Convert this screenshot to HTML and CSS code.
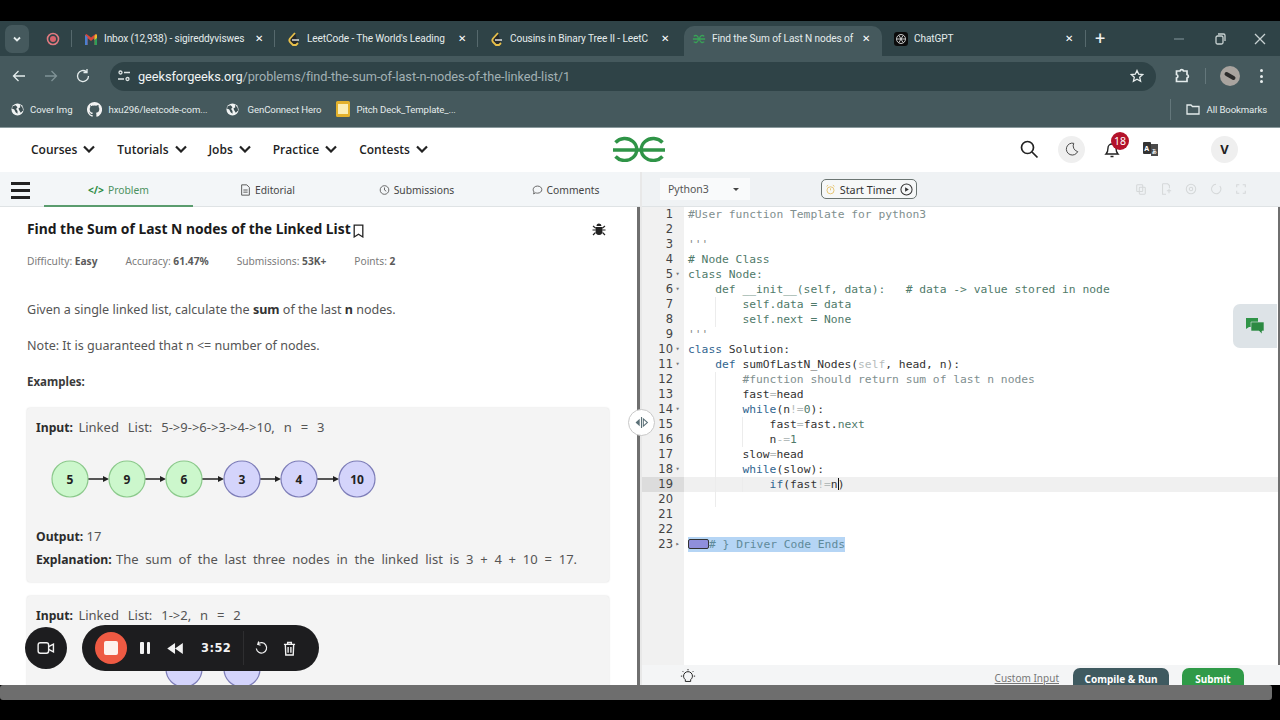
FILE: index.html
```html
<!DOCTYPE html>
<html lang="en">
<head>
<meta charset="utf-8">
<title>Find the Sum of Last N nodes of the Linked List</title>
<link rel="stylesheet" href="styles.css">
</head>
<body>
<div class="shell">
  <div class="blackbar"></div>
  <div class="tabstrip">
    <div class="chip"><svg class="i12" viewBox="0 0 12 12"><path d="M3 4.500 6 7.500 9 4.500"/></svg></div>
    <div class="pinned"><svg class="i16" viewBox="0 0 16 16"><circle class="rec-o" cx="8" cy="8" r="5.500"/><circle class="rec-i" cx="8" cy="8" r="3"/></svg></div>
    <div class="tabsep"></div>
    <div class="tab">
      <svg class="fav" viewBox="0 0 14 14"><path class="g-r" d="M1 3v10h2.500V6L7 9l3.500-3V13H13V3l-1.500-1L7 5.500 2.500 2z"/><path class="g-b" d="M1 3v10h2.500V5z"/><path class="g-g" d="M13 3v10h-2.500V5z"/><path class="g-y" d="M10.500 4 12 2l1 1v3l-2.500 2z"/></svg>
      <span class="ttl">Inbox (12,938) - sigireddyviswes</span><span class="x">✕</span>
    </div>
    <div class="tabsep"></div>
    <div class="tab">
      <svg class="fav" viewBox="0 0 14 14"><path class="lc1" d="M8 1 3 6.500c-1 1.500-1 2.500 0 3.500l3 3h3l2-2"/><path class="lc2" d="M5 8h7"/></svg>
      <span class="ttl">LeetCode - The World's Leading</span><span class="x">✕</span>
    </div>
    <div class="tabsep"></div>
    <div class="tab">
      <svg class="fav" viewBox="0 0 14 14"><path class="lc1" d="M8 1 3 6.500c-1 1.500-1 2.500 0 3.500l3 3h3l2-2"/><path class="lc2" d="M5 8h7"/></svg>
      <span class="ttl">Cousins in Binary Tree II - LeetC</span><span class="x">✕</span>
    </div>
    <div class="tab active">
      <svg class="fav" viewBox="0 0 16 14"><path class="gfgfav" d="M1 7h14M2 4c2-2 5-1 5.500 3C7 11 4 12 2 10M14 4c-2-2-5-1-5.500 3C9 11 12 12 14 10"/></svg>
      <span class="ttl">Find the Sum of Last N nodes of</span><span class="x">✕</span>
    </div>
    <div class="tab">
      <svg class="fav" viewBox="0 0 14 14"><rect class="gpt-bg" width="14" height="14" rx="3"/><circle class="gpt" cx="7" cy="7" r="4.500"/><path class="gpt" d="M5 3.500 9 10.500M9 3.500 5 10.500M3 7h8"/></svg>
      <span class="ttl">ChatGPT</span><span class="x">✕</span>
    </div>
    <div class="tabsep last"></div>
    <div class="newtab">+</div>
    <div class="winctl">
      <svg class="i14 dim" viewBox="0 0 14 14"><path d="M2 7h10"/></svg>
      <svg class="i14" viewBox="0 0 14 14"><rect x="3" y="4" width="7" height="8" rx="1.500"/><path d="M5 2h5.500A1.500 1.500 0 0 1 12 3.500V9"/></svg>
      <svg class="i14" viewBox="0 0 14 14"><path d="M2 2l10 10M12 2 2 12"/></svg>
    </div>
  </div>
  <div class="toolbar">
    <svg class="i16 nav" viewBox="0 0 16 16"><path d="M14 8H2.500M7.500 3l-5 5 5 5"/></svg>
    <svg class="i16 nav dimmer" viewBox="0 0 16 16"><path d="M2 8h11.500M8.500 3l5 5-5 5"/></svg>
    <svg class="i16 nav" viewBox="0 0 16 16"><path d="M13.500 8A5.500 5.500 0 1 1 11.500 3.800M12 1v3.500H8.500"/></svg>
    <div class="omni">
      <svg class="i14 tune" viewBox="0 0 14 14"><circle cx="3.500" cy="3.500" r="1.500"/><path d="M7 3.500h6M1 10h6"/><circle cx="10.500" cy="10" r="1.500"/></svg>
      <span class="url"><b>geeksforgeeks.org</b>/problems/find-the-sum-of-last-n-nodes-of-the-linked-list/1</span>
      <svg class="i14 star" viewBox="0 0 14 14"><path d="M7 1.500 8.700 5.200l4 .4-3 2.700.9 4L7 10.300l-3.600 2 .9-4-3-2.700 4-.4z"/></svg>
    </div>
    <svg class="i16 ext" viewBox="0 0 16 16"><path d="M2.500 3H6a1.800 1.800 0 0 1 3.500 0h3.500v3.500a1.800 1.800 0 0 1 0 3.500v3.500H2.500V10a1.800 1.800 0 0 0 0-3.500z"/></svg>
    <div class="vsep"></div>
    <div class="avatar"><span class="avatar-mark"></span></div>
    <div class="kebab"><i></i><i></i><i></i></div>
  </div>
  <div class="bookmarks">
    <div class="bm"><svg class="globe" viewBox="0 0 14 14"><circle class="gl-a" cx="7" cy="7" r="6.500"/><path class="gl-b" d="M2 3.500 5 2.500l2 2-1.500 2L7 8.500v3L5 10 3.500 7 1 6zM9.500 1.500 12.500 5l.5 3-2.500 2.500L9 8l-1-2 2-1.500z"/></svg>Cover Img</div>
    <div class="bm"><svg class="ghub" viewBox="0 0 16 16"><path d="M8 0a8 8 0 0 0-2.500 15.600c.4.100.5-.2.500-.4v-1.400c-2.200.5-2.700-1-2.700-1-.4-.9-.9-1.200-.9-1.200-.7-.5.100-.5.100-.5.800.100 1.200.8 1.200.8.700 1.200 1.900.9 2.300.7.100-.5.300-.9.500-1.100-1.800-.2-3.600-.9-3.600-4 0-.9.300-1.600.8-2.100-.1-.2-.4-1 .1-2.100 0 0 .7-.2 2.200.8a7.600 7.600 0 0 1 4 0c1.500-1 2.200-.8 2.200-.8.400 1.100.2 1.900.1 2.100.5.500.8 1.200.8 2.100 0 3.100-1.900 3.800-3.700 4 .3.300.6.800.6 1.500v2.200c0 .2.100.5.600.4A8 8 0 0 0 8 0z"/></svg>hxu296/leetcode-com...</div>
    <div class="bm wide"><svg class="globe" viewBox="0 0 14 14"><circle class="gl-a" cx="7" cy="7" r="6.500"/><path class="gl-b" d="M2 3.500 5 2.500l2 2-1.500 2L7 8.500v3L5 10 3.500 7 1 6zM9.500 1.500 12.500 5l.5 3-2.500 2.500L9 8l-1-2 2-1.500z"/></svg>GenConnect Hero</div>
    <div class="bm"><span class="slides"></span>Pitch Deck_Template_...</div>
    <div class="bm-right"><div class="vsep short"></div><svg class="i14" viewBox="0 0 14 14"><path d="M1 3h4l1.500 1.500H13V12H1z"/></svg>All Bookmarks</div>
  </div>

  <div class="page">
    <header class="sitehead">
      <nav class="sitenav">
        <a>Courses<svg class="chev" viewBox="0 0 12 8"><path d="M1 1.500 6 6.500 11 1.500"/></svg></a>
        <a>Tutorials<svg class="chev" viewBox="0 0 12 8"><path d="M1 1.500 6 6.500 11 1.500"/></svg></a>
        <a>Jobs<svg class="chev" viewBox="0 0 12 8"><path d="M1 1.500 6 6.500 11 1.500"/></svg></a>
        <a>Practice<svg class="chev" viewBox="0 0 12 8"><path d="M1 1.500 6 6.500 11 1.500"/></svg></a>
        <a>Contests<svg class="chev" viewBox="0 0 12 8"><path d="M1 1.500 6 6.500 11 1.500"/></svg></a>
      </nav>
      <svg class="logo" viewBox="0 0 54 26"><path d="M1 14h52M3.500 6.500A12 11 0 1 1 3.500 20.500M50.500 6.500A12 11 0 1 0 50.500 20.500"/></svg>
      <div class="headicons">
        <svg class="search" viewBox="0 0 20 20"><circle cx="8.500" cy="8.500" r="6"/><path d="M13 13l5.500 5.500"/></svg>
        <div class="round"><svg class="moon" viewBox="0 0 16 16"><path d="M10 1.500A6.800 6.800 0 1 0 14.500 11 6.800 6.800 0 0 1 10 1.500z"/></svg></div>
        <div class="bell">
          <svg class="bellsvg" viewBox="0 0 16 18"><path d="M2 14c1.500-1.500 2-3 2-6a4 4 0 0 1 8 0c0 3 .5 4.500 2 6zM6.500 16.500h3"/></svg>
          <span class="badge">18</span>
        </div>
        <div class="translate"><span class="tr-a">A</span><span class="tr-b">あ</span></div>
        <div class="round user">V</div>
      </div>
    </header>

    <div class="split">
      <section class="left">
        <div class="ltabs">
          <div class="burger"><i></i><i></i><i></i></div>
          <div class="ltab on"><span class="code-ic">&lt;/&gt;</span> Problem</div>
          <div class="ltab"><svg class="li" viewBox="0 0 12 14"><path d="M1.500 1h6l3 3v9h-9zM3.500 7h5M3.500 9.500h5"/></svg> Editorial</div>
          <div class="ltab"><svg class="li" viewBox="0 0 14 14"><circle cx="7" cy="7" r="5.500"/><path d="M7 3.800V7l2.200 1.500"/></svg> Submissions</div>
          <div class="ltab"><svg class="li" viewBox="0 0 14 14"><path d="M7 2c3.300 0 5.500 2 5.500 4.500S10.300 11 7 11c-1 0-1.800-.2-2.500-.4L2 12l.6-2.500C1.800 8.700 1.500 7.600 1.500 6.500 1.500 4 3.700 2 7 2z"/></svg> Comments</div>
        </div>
        <div class="lbody">
          <div class="titlerow">
            <h1>Find the Sum of Last N nodes of the Linked List</h1>
            <svg class="bookmark" viewBox="0 0 10 13"><path d="M1 1h8v11L5 9.500 1 12z"/></svg>
            <svg class="bug" viewBox="0 0 14 14"><path d="M4.500 4a2.500 2.500 0 0 1 5 0zM3.500 5h7v3.500a3.500 4.500 0 0 1-7 0z"/><path class="bugleg" d="M1 4l2.500 2M13 4l-2.500 2M.5 8h3M13.500 8h-3M1 13l2.500-2.500M13 13l-2.500-2.500"/></svg>
          </div>
          <div class="meta">
            <span>Difficulty: <b>Easy</b></span><span>Accuracy: <b>61.47%</b></span><span>Submissions: <b>53K+</b></span><span>Points: <b>2</b></span>
          </div>
          <p class="para">Given a single linked list, calculate the <b>sum</b> of the last <b>n</b> nodes.</p>
          <p class="para second">Note: It is guaranteed that n &lt;= number of nodes.</p>
          <p class="examples">Examples:</p>
          <div class="example">
            <p class="ex-l"><b>Input:</b> <span class="wsl">Linked List: 5-&gt;9-&gt;6-&gt;3-&gt;4-&gt;10, n = 3</span></p>
            <svg class="ll" viewBox="0 0 340 44">
              <path class="arrow" d="M38 22h16M95 22h16M152 22h17M210 22h16M267 22h17"/>
              <path class="head" d="M59 22l-6-3v6zM116 22l-6-3v6zM174 22l-6-3v6zM231 22l-6-3v6zM289 22l-6-3v6z"/>
              <circle class="gn" cx="20" cy="22" r="18"/><circle class="gn" cx="77" cy="22" r="18"/><circle class="gn" cx="134" cy="22" r="18"/>
              <circle class="pn" cx="192" cy="22" r="18"/><circle class="pn" cx="249" cy="22" r="18"/><circle class="pn" cx="307" cy="22" r="18"/>
              <text x="20" y="26.500">5</text><text x="77" y="26.500">9</text><text x="134" y="26.500">6</text><text x="192" y="26.500">3</text><text x="249" y="26.500">4</text><text x="307" y="26.500">10</text>
            </svg>
            <p class="ex-o"><b>Output:</b> 17</p>
            <p class="ex-e"><b>Explanation:</b> <span class="wse">The sum of the last three nodes in the linked list is 3 + 4 + 10 = 17.</span></p>
          </div>
          <div class="example">
            <p class="ex-l"><b>Input:</b> <span class="wsl">Linked List: 1-&gt;2, n = 2</span></p>
            <svg class="ll ll2" viewBox="0 0 340 44">
              <circle class="pn" cx="134" cy="22" r="18"/><circle class="pn" cx="192" cy="22" r="18"/>
            </svg>
          </div>
        </div>
      </section>

      <section class="right">
        <div class="etools">
          <div class="lang">Python3<span class="caret"></span></div>
          <div class="timer">
            <svg class="alarm" viewBox="0 0 14 14"><circle cx="7" cy="8" r="4.500"/><path d="M2 3l2-1.500M12 3l-2-1.500M7 5.500V8"/></svg>
            <span class="timer-label">Start Timer</span>
            <svg class="playc" viewBox="0 0 14 14"><circle cx="7" cy="7" r="6"/><path class="playt" d="M5.500 4.500v5l4-2.500z"/></svg>
          </div>
          <div class="etool-ic">
            <svg viewBox="0 0 14 14"><rect x="2" y="2" width="7" height="8" rx="1"/><rect x="5" y="5" width="7" height="8" rx="1"/></svg>
            <svg viewBox="0 0 14 14"><path d="M3 1h6l2 2v3M3 1v12h4M8 9h5M10.500 7v5"/></svg>
            <svg viewBox="0 0 14 14"><circle cx="7" cy="7" r="5.500"/><circle cx="7" cy="7" r="2"/></svg>
            <svg viewBox="0 0 14 14"><path d="M11.500 3.500A5.500 5.500 0 1 1 7 1.500"/></svg>
            <svg viewBox="0 0 14 14"><path d="M2 5V2h3M9 2h3v3M12 9v3H9M5 12H2V9"/></svg>
          </div>
        </div>
        <div class="editor">
          <div class="ln"><span class="num">1</span><span class="fold"></span><span class="txt com">#User function Template for python3</span></div>
          <div class="ln"><span class="num">2</span><span class="fold"></span><span class="txt"></span></div>
          <div class="ln"><span class="num">3</span><span class="fold"></span><span class="txt str">'''</span></div>
          <div class="ln"><span class="num">4</span><span class="fold"></span><span class="txt gre"># Node Class</span></div>
          <div class="ln"><span class="num">5</span><span class="fold">▾</span><span class="txt gre">class Node:</span></div>
          <div class="ln"><span class="num">6</span><span class="fold">▾</span><span class="txt gre"><i class="ind"></i>def __init__(self, data):   # data -&gt; value stored in node</span></div>
          <div class="ln"><span class="num">7</span><span class="fold"></span><span class="txt gre"><i class="ind"></i><i class="ind g"></i>self.data = data</span></div>
          <div class="ln"><span class="num">8</span><span class="fold"></span><span class="txt gre"><i class="ind"></i><i class="ind g"></i>self.next = None</span></div>
          <div class="ln"><span class="num">9</span><span class="fold"></span><span class="txt str">'''</span></div>
          <div class="ln"><span class="num">10</span><span class="fold">▾</span><span class="txt"><span class="kw">class</span> Solution:</span></div>
          <div class="ln"><span class="num">11</span><span class="fold">▾</span><span class="txt"><i class="ind"></i><span class="kw">def</span> sumOfLastN_Nodes(<span class="lt">self</span>, head, n):</span></div>
          <div class="ln"><span class="num">12</span><span class="fold"></span><span class="txt"><i class="ind"></i><i class="ind g"></i><span class="com">#function should return sum of last n nodes</span></span></div>
          <div class="ln"><span class="num">13</span><span class="fold"></span><span class="txt"><i class="ind"></i><i class="ind g"></i>fast<span class="lt">=</span>head</span></div>
          <div class="ln"><span class="num">14</span><span class="fold">▾</span><span class="txt"><i class="ind"></i><i class="ind g"></i><span class="kw">while</span>(n<span class="lt">!=</span><span class="gre">0</span>):</span></div>
          <div class="ln"><span class="num">15</span><span class="fold"></span><span class="txt"><i class="ind"></i><i class="ind g"></i><i class="ind g"></i>fast<span class="lt">=</span>fast.<span class="gre">next</span></span></div>
          <div class="ln"><span class="num">16</span><span class="fold"></span><span class="txt"><i class="ind"></i><i class="ind g"></i><i class="ind g"></i>n<span class="lt">-=</span><span class="gre">1</span></span></div>
          <div class="ln"><span class="num">17</span><span class="fold"></span><span class="txt"><i class="ind"></i><i class="ind g"></i>slow<span class="lt">=</span>head</span></div>
          <div class="ln"><span class="num">18</span><span class="fold">▾</span><span class="txt"><i class="ind"></i><i class="ind g"></i><span class="kw">while</span>(slow):</span></div>
          <div class="ln cur"><span class="num">19</span><span class="fold"></span><span class="txt"><i class="ind"></i><i class="ind g"></i><i class="ind g"></i><span class="kw">if</span>(fast<span class="lt">!=</span>n<span class="caretbar"></span>)</span></div>
          <div class="ln"><span class="num">20</span><span class="fold"></span><span class="txt"><i class="ind"></i><i class="ind g"></i></span></div>
          <div class="ln"><span class="num">21</span><span class="fold"></span><span class="txt"></span></div>
          <div class="ln"><span class="num">22</span><span class="fold"></span><span class="txt"></span></div>
          <div class="ln"><span class="num">23</span><span class="fold">▸</span><span class="txt com sel"><span class="foldmark"></span># } Driver Code Ends</span></div>
          <div class="gutterfill"></div>
        </div>
        <div class="efoot">
          <svg class="bulb" viewBox="0 0 18 18"><path d="M6 12c-1-1-2-2-2-4a5 5 0 0 1 10 0c0 2-1 3-2 4v2H6zM9 0v1.500M1 8h1.500M15.500 8H17M3 2.500 4 3.500M15 2.500 14 3.500"/></svg>
          <span class="custom">Custom Input</span>
          <span class="btn dark">Compile &amp; Run</span>
          <span class="btn green">Submit</span>
        </div>
      </section>
    </div>

    <div class="handle"><svg viewBox="0 0 16 12"><path class="ha" d="M6 2 1.500 6 6 10z"/><path class="hb" d="M8 0v12"/><path class="hc" d="M10 2l4.500 4-4.500 4z"/></svg></div>
    <div class="chatbtn"><svg viewBox="0 0 18 16"><path class="c1" d="M0 0h12v9H3l-3 2z"/><path class="c2" d="M5 4h13v9h-2v3l-3-3H5z"/></svg></div>
    <div class="cam"><svg viewBox="0 0 20 16"><rect x="1" y="2" width="12" height="12" rx="2.500"/><path d="M13 6.500 18.500 3.500v9L13 9.500"/></svg></div>
    <div class="rec">
      <div class="stop"><i></i></div>
      <div class="pause"><i></i><i></i></div>
      <svg class="rew" viewBox="0 0 18 12"><path d="M8.500 0v12L0 6zM17 0v12L8.500 6z"/></svg>
      <span class="time">3:52</span>
      <div class="recsep"></div>
      <svg class="undo" viewBox="0 0 16 16"><path d="M4 3.500A5.500 5.500 0 1 1 2.500 8M5 .5 4 3.500l3 1"/></svg>
      <svg class="trash" viewBox="0 0 14 16"><path d="M1 3.500h12M5 3V1.500h4V3M2.500 3.500 3 15h8l.5-11.500M5.500 6.500v6M8.500 6.500v6"/></svg>
    </div>
  </div>
  <div class="graybar"></div>
</div>
</body>
</html>
```
FILE: styles.css
```css
* { box-sizing: border-box; }
html, body { margin: 0; height: 100%; background: #000; overflow: hidden; }
body { font-family: "Noto Sans", "Open Sans", sans-serif; }
p, h1 { margin: 0; }
svg { display: block; flex: none; }
.shell { width: 1280px; height: 720px; display: flex; flex-direction: column; background: #000; }
.blackbar { height: 21px; flex: none; }

/* Tab strip */
.tabstrip { height: 35px; flex: none; background: #2f4347; display: flex; align-items: center; padding-left: 5px; color: #e4ecec; font-family: Roboto, "Noto Sans", sans-serif; font-size: 10.100px; }
.i12, .i14, .i16 { fill: none; stroke: currentColor; stroke-width: 1.3; }
.i12 { width: 12px; height: 12px; stroke-width: 1.8; }
.i14 { width: 14px; height: 14px; }
.i16 { width: 16px; height: 16px; }
.chip { width: 24px; height: 28px; background: #45595d; border-radius: 7px; display: flex; align-items: center; justify-content: center; }
.pinned { width: 37px; margin-left: 5px; display: flex; justify-content: center; }
.rec-o { stroke: #e07a80; stroke-width: 1.6; fill: none; }
.rec-i { fill: #d9626c; stroke: none; }
.tabsep { width: 1px; height: 17px; background: #56696d; flex: none; }
.tabsep.last { margin-left: 1px; }
.tab { width: 202px; height: 35px; padding: 0 9px 0 12px; display: flex; align-items: center; gap: 6px; flex: none; }
.tab.active { background: #45595d; border-radius: 10px 10px 0 0; width: 198px; margin-top: 5px; height: 30px; margin-left: 4px; padding: 0 10px 5px 8px; }
.fav { width: 14px; height: 14px; fill: none; }
.ttl { flex: 1; white-space: nowrap; overflow: hidden; letter-spacing: -0.1px; }
.x { width: 12px; text-align: center; font-size: 10px; color: #fff; flex: none; }
.g-r { fill: #d8463a; } .g-b { fill: #4a7fd0; } .g-g { fill: #2f9e58; } .g-y { fill: #eab92e; }
.lc1 { stroke: #e8c04a; stroke-width: 1.8; fill: #26282a; }
.lc2 { stroke: #e8e8e8; stroke-width: 1.4; }
.gfgfav { stroke: #39a257; stroke-width: 1.5; }
.gpt-bg { fill: #0b0b0b; }
.gpt { stroke: #ddd; stroke-width: 0.9; fill: none; }
.newtab { margin-left: 7px; font-size: 18px; font-weight: 400; width: 14px; text-align: center; color: #f0f0f0; }
.winctl { margin-left: auto; width: 170px; padding-right: 13px; padding-left: 62px; display: flex; justify-content: space-between; color: #c8d2d2; }
.dim { color: #73868a; }

/* Toolbar */
.toolbar { height: 38px; flex: none; background: #45595d; display: flex; align-items: center; padding: 2px 0 0 11px; color: #e4ecec; }
.nav { margin-right: 16px; }
.dimmer { color: #7f9296; }
.omni { width: 1046px; height: 29px; margin-left: 3px; background: #2f4347; border-radius: 15px; display: flex; align-items: center; padding: 0 12px 0 7px; gap: 7px; }
.tune { color: #dfe6e6; }
.url { flex: 1; font-family: Roboto, "Noto Sans", sans-serif; font-size: 12.750px; color: #a2b1b4; letter-spacing: -0.05px; white-space: nowrap; }
.url b { font-weight: 400; color: #f0f4f4; }
.star { color: #e8eeee; }
.ext { margin-left: 18px; stroke-width: 1.7; }
.vsep { width: 1px; height: 16px; background: #64777b; flex: none; margin-left: 15px; }
.avatar { width: 20px; height: 20px; border-radius: 50%; background: #a9a49f; margin-left: 14px; display: flex; align-items: center; justify-content: center; }
.avatar-mark { width: 12px; height: 4px; background: #2c2c2c; border-radius: 3px; transform: rotate(30deg); }
.kebab { margin-left: 20px; display: flex; flex-direction: column; gap: 2.500px; }
.kebab i { width: 3px; height: 3px; border-radius: 50%; background: #e8eeee; display: block; }

/* Bookmarks */
.bookmarks { height: 34px; flex: none; background: #45595d; border-bottom: 1px solid #8a9a9d; display: flex; align-items: center; padding: 0 0 3px 11px; gap: 15px; color: #e4ecec; font-family: Roboto, "Noto Sans", sans-serif; font-size: 9.600px; letter-spacing: -0.1px; }
.bm { display: flex; align-items: center; gap: 6px; white-space: nowrap; }
.bm.wide { gap: 9px; margin-left: 3px; }
.globe { width: 13px; height: 13px; }
.gl-a { fill: #f0f3f3; }
.gl-b { fill: #3d4f53; }
.ghub { width: 15px; height: 15px; fill: #f2f2f2; }
.slides { width: 14px; height: 16px; border-radius: 1.500px; border: 3px solid #e3b12c; border-left-width: 2px; border-right-width: 2px; background-color: #fbeeb6; display: block; }
.bm-right { margin-left: auto; display: flex; align-items: center; gap: 7px; padding-right: 13px; }
.short { margin: 0 8px 0 0; height: 21px; }

/* Page */
.page { flex: 1; min-height: 0; background: #fff; position: relative; display: flex; flex-direction: column; overflow: hidden; }
.sitehead { height: 44px; flex: none; display: flex; align-items: center; padding: 0 0 2px 31px; position: relative; }
.sitenav { display: flex; gap: 22px; font-family: "Open Sans", sans-serif; font-size: 12px; font-weight: 600; color: #222; }
.sitenav a { display: flex; align-items: center; gap: 6px; }
.chev { width: 12px; height: 8px; fill: none; stroke: #222; stroke-width: 2.2; }
.logo { position: absolute; left: 612px; top: 8px; width: 54px; height: 26px; fill: none; stroke: #2f9447; stroke-width: 3.4; }
.headicons { margin-left: auto; display: flex; align-items: center; padding-right: 42px; }
.search { width: 20px; height: 20px; fill: none; stroke: #222; stroke-width: 1.7; }
.round { width: 27px; height: 27px; border-radius: 50%; background: #efefef; display: flex; align-items: center; justify-content: center; margin-left: 19px; }
.moon { width: 14px; height: 14px; fill: none; stroke: #444; stroke-width: 1.1; }
.bell { position: relative; margin-left: 19px; width: 16px; height: 20px; }
.bellsvg { width: 16px; height: 20px; fill: none; stroke: #222; stroke-width: 1.4; }
.badge { position: absolute; left: 7px; top: -7px; width: 18px; height: 18px; border-radius: 50%; background: #b3122a; color: #fff; font-size: 10.500px; text-align: center; line-height: 18px; }
.translate { margin-left: 23px; width: 15px; height: 14px; display: flex; font-size: 7px; color: #fff; font-weight: 700; line-height: 13px; }
.tr-a { width: 8px; height: 12px; background: #333; text-align: center; border-radius: 1px; }
.tr-b { width: 8px; height: 12px; margin-top: 2px; background: #4a4a4a; text-align: center; font-size: 5px; font-family: "Noto Sans CJK JP", sans-serif; }
.user { margin-left: 53px; font-size: 13px; font-weight: 700; color: #222; }

.split { flex: 1; min-height: 0; display: flex; background: #e8e8e8; }
.left { width: 640px; flex: none; display: flex; flex-direction: column; overflow: hidden; color: #333; }
.ltabs { height: 35px; flex: none; background: #f3f6f8; border-bottom: 1px solid #dfe3e5; display: flex; align-items: stretch; font-size: 10.300px; color: #454545; padding-top: 2px; }
.burger { width: 44px; padding: 8px 0 0 11px; display: flex; flex-direction: column; gap: 4.500px; }
.burger i { display: block; width: 19px; height: 2.500px; background: #222; }
.ltab { display: flex; align-items: center; justify-content: center; gap: 4px; white-space: nowrap; width: 149.500px; }
.ltab.on { color: #4b9160; border-bottom: 2px solid #5a9c6e; margin-bottom: -1px; }
.code-ic { font-weight: 700; color: #2f8d46; }
.li { width: 11px; height: 12px; fill: none; stroke: #555; stroke-width: 1.1; }
.lbody { flex: 1; min-height: 0; padding: 0 28px 0 27px; background: #fff; border-right: 3px solid #6f6f6f; }
.titlerow { height: 43px; display: flex; align-items: center; gap: 2px; }
h1 { font-size: 13.870px; font-weight: 700; color: #1b1b1b; white-space: nowrap; }
.bookmark { width: 11px; height: 14px; fill: none; stroke: #222; stroke-width: 1.2; margin-top: 4px; }
.bug { width: 14px; height: 14px; margin-left: auto; margin-right: 3px; fill: #222; }
.bugleg { fill: none; stroke: #222; stroke-width: 1.2; }
.meta { display: flex; gap: 28px; font-size: 10.200px; color: #7a7a7a; margin-top: 4px; height: 14px; line-height: 14px; }
.meta b { color: #5a5a5a; font-weight: 700; }
.para { font-size: 12.550px; line-height: 18px; color: #555; margin-top: 33px; }
.para b { color: #333; }
.para.second { margin-top: 18px; }
.examples { font-size: 11.500px; line-height: 16px; font-weight: 700; color: #3a3a3a; margin-top: 19px; }
.example { background: #f4f4f4; border-radius: 3px; box-shadow: 0 0 2px rgba(0,0,0,.18); padding: 0 9px; height: 174px; margin-top: 18px; }
.example + .example { margin-top: 14px; height: 120px; }
.ex-l { font-size: 13px; line-height: 18px; padding-top: 10px; height: 39px; color: #555; }
.ex-l b, .ex-o b, .ex-e b { color: #2c2c2c; font-weight: 700; font-size: 12.200px; }
.wsl { word-spacing: 5.500px; margin-left: 2px; }
.wse { word-spacing: 3.400px; margin-left: 1px; }
.ll { width: 340px; height: 44px; margin: 10px 0 0 14px; }
.ll text { font-family: "Noto Sans", sans-serif; font-size: 12px; font-weight: 700; text-anchor: middle; fill: #222; }
.ll2 { margin-top: 12px; }
.arrow { stroke: #222; stroke-width: 1.4; fill: none; }
.head { fill: #222; }
.gn { fill: #ccf7cc; stroke: #8bc98b; stroke-width: 1.2; }
.pn { fill: #d4d4fb; stroke: #7d7db8; stroke-width: 1.2; }
.ex-o { font-size: 13px; line-height: 18px; margin-top: 26px; color: #555; }
.ex-e { font-size: 13px; line-height: 18px; margin-top: 4px; color: #555; white-space: nowrap; }

.right { flex: 1; min-width: 0; display: flex; flex-direction: column; margin-left: 2px; background: #fff; }
.etools { height: 35px; flex: none; background: #eff2f4; border-bottom: 1px solid #dfe3e5; display: flex; align-items: center; padding-left: 18px; font-size: 10.500px; }
.lang { width: 90px; height: 22px; background: #f9fafb; padding-left: 8px; display: flex; align-items: center; color: #555; position: relative; }
.caret { position: absolute; left: 73px; top: 10px; border: 3px solid transparent; border-top-color: #444; }
.timer { margin-left: 71px; width: 96px; height: 20px; border: 1px solid #6b7572; border-radius: 5px; display: flex; align-items: center; justify-content: center; gap: 4px; color: #333; font-size: 10.800px; background: #f6f8f8; }
.timer-label { white-space: nowrap; }
.alarm { width: 11px; height: 11px; fill: none; stroke: #e6c46f; stroke-width: 1.2; }
.playc { width: 13px; height: 13px; fill: none; stroke: #333; stroke-width: 1.1; }
.playt { fill: #333; stroke: none; }
.etool-ic { margin-left: auto; display: flex; gap: 13px; padding-right: 33px; }
.etool-ic svg { width: 12px; height: 12px; fill: none; stroke: #d5d8d9; stroke-width: 1.2; }

.editor { flex: 1; min-height: 0; display: flex; flex-direction: column; font-family: "DejaVu Sans Mono", monospace; font-size: 11.300px; color: #333; background: #fff; border-right: 2px solid #6f6f6f; }
.ln { height: 15px; flex: none; line-height: 15px; display: flex; }
.num { width: 31px; flex: none; background: #f1f1f1; text-align: right; color: #444; font-size: 11.500px; font-family: "DejaVu Sans", sans-serif; }
.fold { width: 11px; flex: none; background: #f1f1f1; color: #777; font-size: 7px; text-align: center; padding-right: 2px; }
.txt { flex: 1; padding-left: 4px; white-space: pre; }
.gutterfill { flex: 1; width: 42px; background: #f1f1f1; }
.ind { display: inline-block; width: 4ch; height: 15px; vertical-align: top; font-style: normal; }
.ind.g { box-shadow: inset 1px 0 0 #ececec; }
.cur .num, .cur .fold { background: #dcdcdc; }
.cur .txt { background: #f0f0f0; }
.com { color: #7f8f8f; }
.gre { color: #4f7a6a; }
.kw { color: #31658f; }
.str { color: #888; }
.lt { color: #b5bcbc; }
.caretbar { display: inline-block; width: 1.500px; height: 12px; background: #111; vertical-align: -2px; margin-right: -1.500px; }
.sel { flex: none; background: #b5d5f5; padding-left: 0; margin-left: 4px; color: #5f8a9a; }
.foldmark { display: inline-block; width: 21px; height: 10px; background: #8f8fdc; border: 1px solid #333; border-radius: 2px; vertical-align: -1px; }
.efoot { height: 20px; flex: none; background: #f4f5f6; display: flex; align-items: flex-start; padding-top: 3px; font-size: 10px; }
.bulb { width: 18px; height: 16px; fill: none; stroke: #222; stroke-width: 1.1; margin-left: 37px; margin-top: 1px; }
.custom { margin-left: auto; color: #777; text-decoration: underline; margin-top: 3px; font-size: 10px; line-height: 14px; }
.btn { height: 17px; border-radius: 7px 7px 0 0; color: #fff; font-weight: 700; text-align: center; padding-top: 6px; line-height: 11px; font-size: 10px; }
.dark { width: 96px; background: #3f5a60; margin-left: 14px; }
.green { width: 62px; background: #2f9a48; margin-left: 13px; margin-right: 36px; }

/* Overlays */
.handle { position: absolute; left: 628px; top: 281px; width: 27px; height: 27px; border-radius: 50%; background: #fff; border: 1px solid #c8c8c8; display: flex; align-items: center; justify-content: center; }
.handle svg { width: 15px; height: 11px; }
.ha { fill: #5a6f76; }
.hb { stroke: #5a6f76; stroke-width: 1.2; }
.hc { fill: none; stroke: #5a6f76; stroke-width: 1.1; }
.chatbtn { position: absolute; left: 1233px; top: 176px; width: 44px; height: 44px; background: #dde3e7; border-radius: 7px 0 0 7px; display: flex; align-items: center; justify-content: center; }
.chatbtn svg { width: 18px; height: 16px; }
.c1 { fill: #2f9447; }
.c2 { fill: #2c8a42; stroke: #dde3e7; stroke-width: .6; }
.cam { position: absolute; left: 25px; top: 499px; width: 42px; height: 42px; border-radius: 50%; background: #1d1d1f; display: flex; align-items: center; justify-content: center; }
.cam svg { width: 18px; height: 14px; fill: none; stroke: #f2f2f2; stroke-width: 1.6; }
.rec { position: absolute; left: 82px; top: 497px; width: 237px; height: 46px; border-radius: 23px; background: #1d1d1f; display: flex; align-items: center; padding-left: 13px; color: #f2f2f2; }
.stop { width: 32px; height: 32px; border-radius: 50%; background: #ee5a43; display: flex; align-items: center; justify-content: center; }
.stop i { width: 14px; height: 14px; background: #fdf2ee; border-radius: 2px; display: block; }
.pause { display: flex; gap: 3px; margin-left: 13px; }
.pause i { width: 3.500px; height: 12px; background: #f2f2f2; border-radius: 1px; display: block; }
.rew { width: 17px; height: 11px; fill: #f2f2f2; margin-left: 17px; }
.time { font-family: "DejaVu Sans", sans-serif; font-size: 11.500px; font-weight: 700; margin-left: 17px; letter-spacing: .4px; white-space: nowrap; }
.recsep { width: 1px; height: 34px; background: #2e2e30; margin-left: 12px; }
.undo { width: 15px; height: 15px; fill: none; stroke: #f2f2f2; stroke-width: 1.3; margin-left: 10px; }
.trash { width: 13px; height: 15px; fill: none; stroke: #f2f2f2; stroke-width: 1.5; margin-left: 14px; }

.graybar { height: 15px; flex: none; width: 1272px; background: #6e6e6e; border-radius: 3px; }
.shell::after { content: ""; height: 20px; flex: none; background: #000; }
```
